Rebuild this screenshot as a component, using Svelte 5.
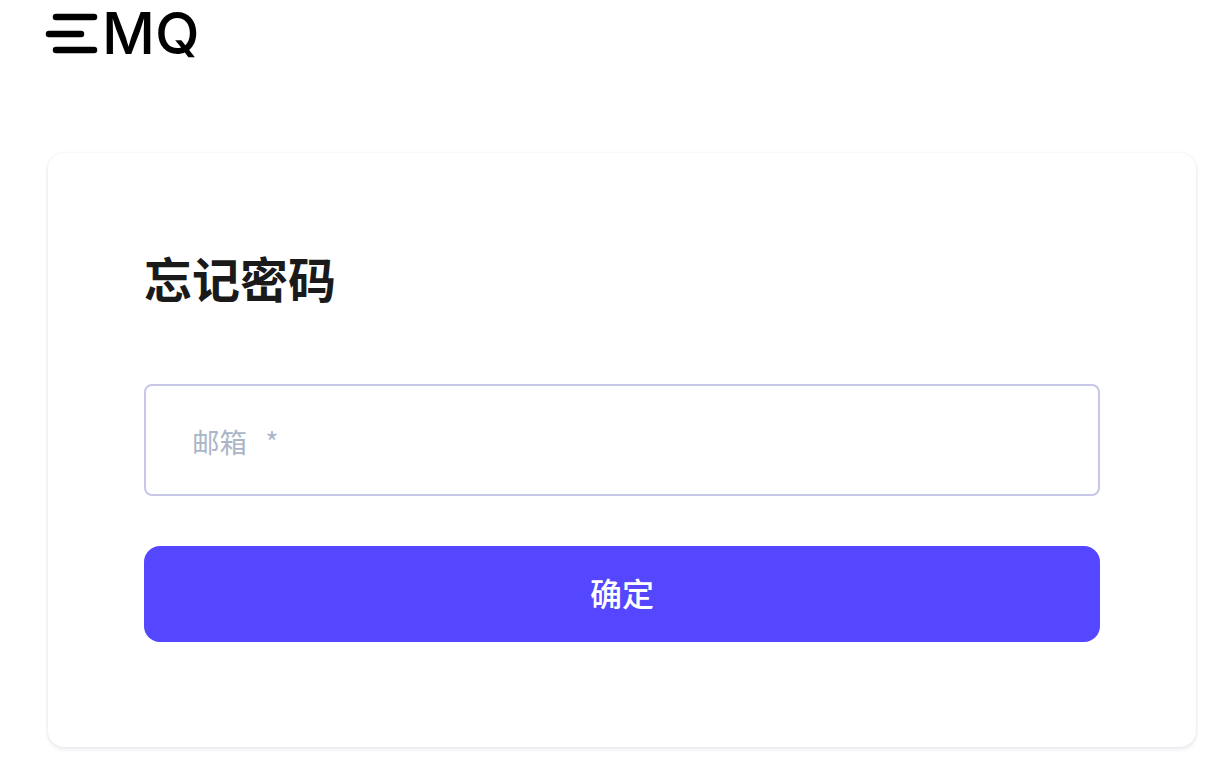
<script>
  let email = $state("");

  function submit(e) {
    e.preventDefault();
  }
</script>

<div class="page">
  <header class="logo">
    <svg class="logo-bars" width="52" height="40" viewBox="0 0 52 40" aria-hidden="true">
      <path d="M10 2H48M3 19H35M10 35H48" fill="none" stroke="#000" stroke-width="6.5" stroke-linecap="round" />
    </svg>
    <span class="logo-text">MQ</span>
  </header>

  <main class="card">
    <h1>忘记密码</h1>
    <form onsubmit={submit}>
      <input type="text" bind:value={email} placeholder="邮箱   *" />
      <button type="submit">确定</button>
    </form>
  </main>
</div>

<style>
  :global(body) {
    margin: 0;
    background: #fff;
    font-family: "Noto Sans CJK SC", "Liberation Sans", sans-serif;
  }

  .page {
    padding: 13px 34px 25px 47px;
  }

  .logo {
    display: flex;
    align-items: center;
    gap: 4px;
    height: 44px;
    margin-left: -1px;
  }

  .logo-bars {
    overflow: visible;
  }

  .logo-text {
    margin-top: -4px;
    font-family: Inter, "Liberation Sans", sans-serif;
    font-size: 58px;
    line-height: 40px;
    font-weight: 550;
    color: #000;
  }

  .card {
    margin-top: 96px;
    margin-left: 1px;
    height: 594px;
    box-sizing: border-box;
    padding: 89px 96px 0;
    background: #fff;
    border-radius: 16px;
    box-shadow: 0 0 3px rgba(30, 30, 80, 0.09), 0 3px 4px rgba(30, 30, 80, 0.07);
  }

  h1 {
    margin: 0 0 72px;
    font-size: 48px;
    line-height: 70px;
    font-weight: 700;
    color: #1a1a1a;
  }

  form {
    display: flex;
    flex-direction: column;
    gap: 50px;
  }

  input {
    height: 112px;
    box-sizing: border-box;
    padding: 2px 46px 0;
    border: 2px solid #c6c8e6;
    border-radius: 8px;
    font: inherit;
    font-size: 27.5px;
    color: #1a1a1a;
    outline: none;
    white-space: pre;
  }

  input::placeholder {
    color: #aab6c8;
    opacity: 1;
  }

  button {
    height: 96px;
    padding: 0 0 4px;
    border: none;
    border-radius: 16px;
    background: #5546ff;
    color: #fff;
    font: inherit;
    font-size: 32px;
    font-weight: 500;
    cursor: pointer;
  }
</style>
